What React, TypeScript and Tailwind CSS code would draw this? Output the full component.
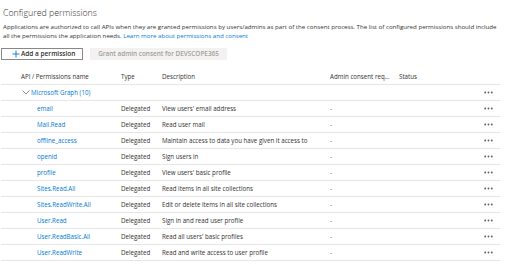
import React from "react";

const rows = [
  ["email", "View users' email address"],
  ["Mail.Read", "Read user mail"],
  ["offline_access", "Maintain access to data you have given it access to"],
  ["openid", "Sign users in"],
  ["profile", "View users' basic profile"],
  ["Sites.Read.All", "Read items in all site collections"],
  ["Sites.ReadWrite.All", "Edit or delete items in all site collections"],
  ["User.Read", "Sign in and read user profile"],
  ["User.ReadBasic.All", "Read all users' basic profiles"],
  ["User.ReadWrite", "Read and write access to user profile"],
];

function Dots() {
  return (
    <svg width="9" height="3" viewBox="0 0 9 3" className="block">
      <circle cx="1.2" cy="1.5" r="0.9" fill="#605e5c" />
      <circle cx="4.5" cy="1.5" r="0.9" fill="#605e5c" />
      <circle cx="7.8" cy="1.5" r="0.9" fill="#605e5c" />
    </svg>
  );
}

const rowCls =
  "grid grid-cols-[120px_41px_168px_69px_1fr_16px] h-[16px] items-center border-b border-[#e6e6e6]";

export default function App() {
  return (
    <div
      className="w-[506px] h-[270px] bg-white text-[#323130] overflow-hidden"
      style={{ fontFamily: "'Open Sans', 'Noto Sans', sans-serif" }}
    >
      <div className="pl-[3px] pt-[7px] text-[8.8px] leading-[13px] text-[#323130] font-light">
        Configured permissions
      </div>
      <div className="pl-[3px] pt-[2px] text-[6.15px] leading-[9px] text-[#323130] whitespace-nowrap">
        <div>
          Applications are authorized to call APIs when they are granted permissions by users/admins as part of the consent process. The list of configured permissions should include
        </div>
        <div>
          all the permissions the application needs.{" "}
          <span className="text-[#0078d4]">Learn more about permissions and consent</span>
        </div>
      </div>
      <div className="flex pl-[1px] pt-[8px] gap-[7px]">
        <div className="w-[82px] h-[12px] border border-[#8a8886] flex items-center pl-[10px] gap-[1px]">
          <svg width="8" height="8" viewBox="0 0 8 8" className="block">
            <path d="M4 0.5V7.5M0.5 4H7.5" stroke="#0078d4" strokeWidth="0.9" />
          </svg>
          <span className="text-[6.5px] leading-[10px] font-semibold text-[#323130]">Add a permission</span>
        </div>
        <div className="w-[137px] h-[12px] bg-[#f3f2f1] flex items-center justify-center">
          <span className="text-[6.4px] leading-[10px] font-semibold text-[#a19f9d]">
            Grant admin consent for DEVSCOPE365
          </span>
        </div>
      </div>
      <div className="ml-[1px] w-[499px] mt-[9px] text-[6.2px]">
        <div className={rowCls + " text-[#323130]"}>
          <div className="pl-[20px] whitespace-nowrap">API / Permissions name</div>
          <div>Type</div>
          <div>Description</div>
          <div className="whitespace-nowrap">Admin consent req...</div>
          <div>Status</div>
          <div />
        </div>
        <div className={rowCls}>
          <div className="pl-[21px] flex items-center gap-[1px] whitespace-nowrap text-[#0078d4]">
            <svg width="8" height="5" viewBox="0 0 8 5" className="block">
              <path d="M0.5 0.5L4 4L7.5 0.5" stroke="#605e5c" strokeWidth="0.7" fill="none" />
            </svg>
            <span>Microsoft Graph (10)</span>
          </div>
          <div />
          <div />
          <div />
          <div />
          <div className="flex items-center">
            <Dots />
          </div>
        </div>
        {rows.map(([name, desc]) => (
          <div key={name} className={rowCls}>
            <div className="pl-[36px] text-[#0078d4] whitespace-nowrap">{name}</div>
            <div className="text-[#323130]">Delegated</div>
            <div className="text-[#323130] whitespace-nowrap">{desc}</div>
            <div className="text-[#605e5c]">-</div>
            <div />
            <div className="flex items-center">
              <Dots />
            </div>
          </div>
        ))}
      </div>
    </div>
  );
}
